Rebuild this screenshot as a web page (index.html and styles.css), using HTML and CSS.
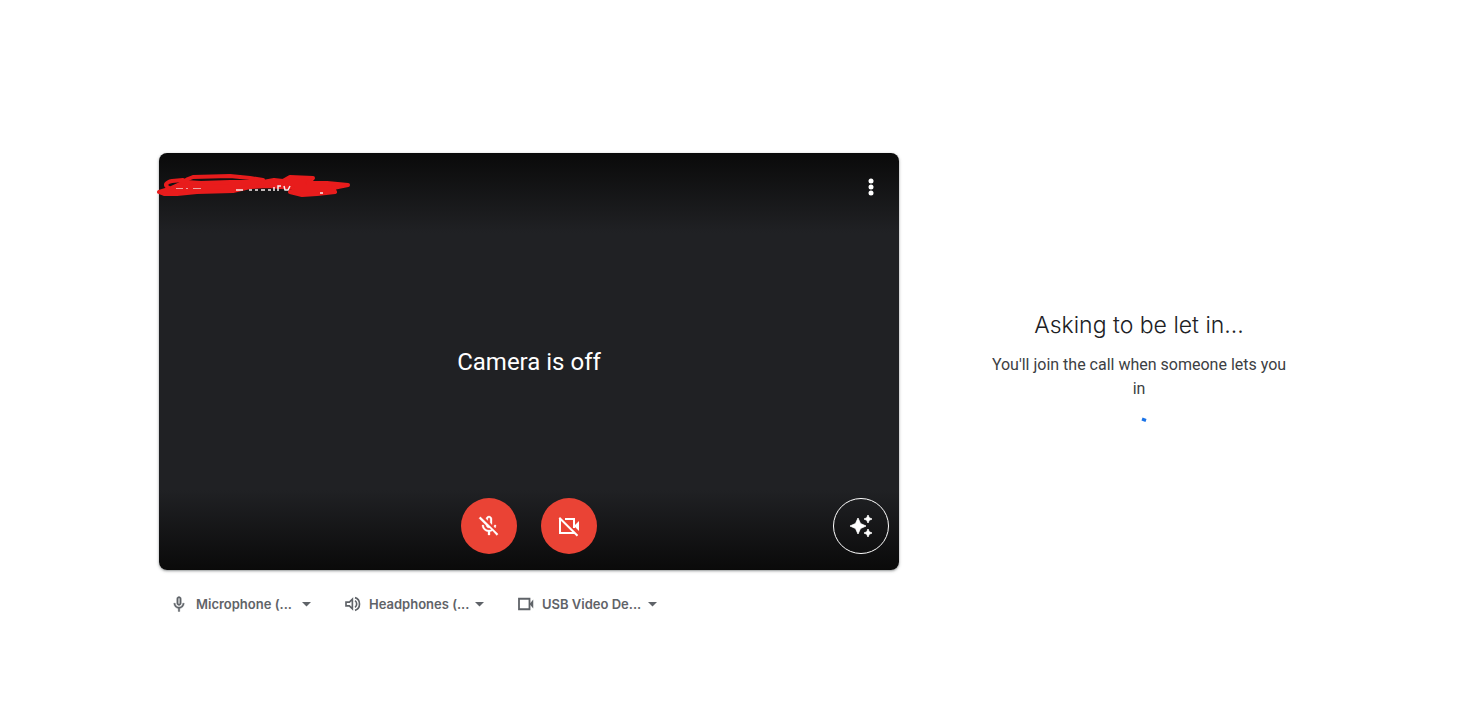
FILE: index.html
```html
<!DOCTYPE html>
<html lang="en">
<head>
<meta charset="utf-8">
<meta name="viewport" content="width=device-width, initial-scale=1">
<title>Asking to be let in</title>
<link rel="stylesheet" href="styles.css">
</head>
<body>
<main class="lobby">
  <section class="setup">
    <div class="preview">
      <header class="preview-top">
        <svg class="scribble" viewBox="0 0 196 24" aria-hidden="true">
          <g fill="#e81c1c" stroke="#e81c1c" stroke-width="4" stroke-linecap="round" stroke-linejoin="round">
            <path d="M3 18L13 15L24 10L30 8L45 9L74 8L94 8L107 8L118 6L127 7L134 3L157 4L152 9L171 9L192 11L177 14L179 18L161 20L146 21L134 18L137 14L112 12L94 13L77 17L41 18L21 20L8 20Z"/>
            <path fill="none" d="M27 8L32 5L37 3L74 2L94 4L107 6M13 14C7 11 11 8 16 7L27 6"/>
          </g>
          <g fill="none" stroke="#f6eeee" stroke-width="1.500">
            <path stroke-width="1" stroke="#eea5a5" d="M20 14.500h7M30 14.500h2M37 14.500h8"/>
            <path d="M80 16h7M93 16h3M99 16h3M105 16h4M112 16h3M118 17v-4M122 17v-5h3M128 12l1 4h3l2-4M164 19h3"/>
          </g>
        </svg>
        <button class="more" type="button" aria-label="More options">
          <svg width="24" height="24" viewBox="0 0 24 24" fill="currentColor"><circle cx="12" cy="6" r="2.5"/><circle cx="12" cy="12" r="2.5"/><circle cx="12" cy="18" r="2.5"/></svg>
        </button>
      </header>
      <p class="camera-state">Camera is off</p>
      <div class="controls">
        <div class="toggles">
          <button class="round off" type="button" aria-label="Turn on microphone">
            <svg width="24" height="24" viewBox="0 0 24 24" fill="currentColor" stroke="currentColor" stroke-width=".3"><path d="M10.800 4.900c0-.66.54-1.200 1.200-1.200s1.200.54 1.200 1.200l-.01 3.910L15 10.600V5c0-1.660-1.340-3-3-3-1.540 0-2.790 1.160-2.960 2.650l1.760 1.760V4.900zM19 11h-1.700c0 .58-.1 1.130-.27 1.640l1.270 1.270c.44-.88.7-1.870.7-2.910zM3.410 2.860L2 4.270l7 7c.2 1.600 1.500 2.730 3 2.730.23 0 .44-.03.65-.08l1.660 1.660c-.71.33-1.500.52-2.310.52-2.760 0-5.300-2.100-5.300-5.100H5c0 3.410 2.720 6.230 6 6.720V21h2v-3.280c.91-.13 1.770-.45 2.550-.9l4.200 4.600 1.410-1.410z"/></svg>
          </button>
          <button class="round off" type="button" aria-label="Turn on camera">
            <svg width="24" height="24" viewBox="0 0 24 24" fill="none" stroke="currentColor" stroke-width="2"><path d="M8 5h9v9M18 19H3V5M2.300 3.700l18.200 18"/><path fill="currentColor" stroke="none" d="M17 12l5-5v10z"/></svg>
          </button>
        </div>
        <button class="round effects" type="button" aria-label="Apply visual effects">
          <svg width="24" height="24" viewBox="0 0 24 24" fill="currentColor"><path d="M11.500 9.500L9 4 6.500 9.500 1 12l5.500 2.500L9 20l2.500-5.500L17 12zM19 9l1.250-2.750L23 5l-2.750-1.250L19 1l-1.250 2.750L15 5l2.750 1.250zM19 15l-1.250 2.750L15 19l2.750 1.250L19 23l1.250-2.750L23 19l-2.750-1.250z" stroke="currentColor" stroke-width=".8"/></svg>
        </button>
      </div>
    </div>
    <div class="devices">
      <label class="device">
        <svg width="18" height="18" viewBox="0 0 24 24" fill="currentColor"><path d="M12 14c1.660 0 3-1.340 3-3V5c0-1.660-1.340-3-3-3S9 3.340 9 5v6c0 1.660 1.340 3 3 3zM11 5c0-.55.45-1 1-1s1 .45 1 1v6c0 .55-.45 1-1 1s-1-.45-1-1V5zm6 6c0 2.760-2.240 5-5 5s-5-2.240-5-5H5c0 3.530 2.610 6.430 6 6.920V22h2v-4.080c3.390-.49 6-3.390 6-6.920h-2z" stroke="currentColor" stroke-width=".5"/></svg>
        <select aria-label="Microphone"><option>Microphone (...</option></select>
        <svg class="caret" width="10" height="5" viewBox="0 0 10 5" fill="currentColor"><path d="M0 0h9L4.500 4.500z"/></svg>
      </label>
      <label class="device">
        <svg width="18" height="18" viewBox="0 0 24 24" fill="none" stroke="currentColor" stroke-width="2.200"><path d="M4 9.500v5h4.500l4 4v-13l-4 4z"/><path d="M16 7.500c3 2 3 7 0 9M16 3.500c8 2.500 8 14.500 0 17"/></svg>
        <select aria-label="Speaker"><option>Headphones (...</option></select>
        <svg class="caret" width="10" height="5" viewBox="0 0 10 5" fill="currentColor"><path d="M0 0h9L4.500 4.500z"/></svg>
      </label>
      <label class="device">
        <svg width="18" height="18" viewBox="0 0 24 24" fill="none" stroke="currentColor" stroke-width="2.400"><path d="M4 5h14v14H4z"/><path fill="currentColor" stroke="none" d="M18 12l5-6v12z"/></svg>
        <select aria-label="Camera"><option>USB Video De...</option></select>
        <svg class="caret" width="10" height="5" viewBox="0 0 10 5" fill="currentColor"><path d="M0 0h9L4.500 4.500z"/></svg>
      </label>
    </div>
  </section>
  <section class="waiting" role="status">
    <h1>Asking to be let in...</h1>
    <p>You'll join the call when someone lets you in</p>
    <svg class="spinner" width="28" height="28" viewBox="0 0 28 28" aria-hidden="true"><path d="M17 2l4 1.500" fill="none" stroke="#1a73e8" stroke-width="3"/></svg>
  </section>
</main>
</body>
</html>
```
FILE: styles.css
```css
* {
  box-sizing: border-box;
}

body {
  margin: 0;
  background: #fff;
  color: #202124;
  font-family: Roboto, "Liberation Sans", sans-serif;
}

button {
  display: grid;
  place-items: center;
  padding: 0;
  border: 0;
  background: none;
  color: #fff;
  cursor: pointer;
}

.lobby {
  display: grid;
  grid-template-columns: 740fr 356fr;
  gap: 62px;
  max-width: 1158px;
  margin: 0 auto;
  padding-top: 153px;
}

.preview {
  position: relative;
  display: flex;
  flex-direction: column;
  justify-content: space-between;
  aspect-ratio: 740 / 417;
  border-radius: 8px;
  background: linear-gradient(#0a0a0a, #202124 80px, #202124 calc(100% - 80px), #0a0a0a);
  box-shadow: 0 1px 2px rgba(60, 64, 67, 0.4), 0 1px 3px 1px rgba(60, 64, 67, 0.15);
}

.preview-top {
  display: flex;
  justify-content: flex-end;
  height: 72px;
  padding: 10px 4px 0 0;
}

.scribble {
  position: absolute;
  top: 21px;
  left: -3px;
  width: 196px;
  height: 24px;
}

.more {
  width: 48px;
  height: 48px;
}

.camera-state {
  margin: 0;
  color: #fff;
  font-size: 24px;
  line-height: 32px;
  text-align: center;
}

.controls {
  display: grid;
  grid-template-columns: 1fr auto 1fr;
  padding: 0 10px 16px;
}

.toggles {
  display: flex;
  grid-column: 2;
  gap: 24px;
}

.round {
  width: 56px;
  height: 56px;
  border-radius: 50%;
}

.off {
  background: #ea4335;
}

.effects {
  justify-self: end;
  border: 1px solid #fff;
}

.devices {
  display: flex;
  gap: 32px;
  padding: 22px 0 0 11px;
}

.device {
  display: grid;
  grid-template-columns: 18px 106px 17px;
  align-items: center;
  color: #5f6368;
}

.device select {
  grid-row: 1;
  grid-column: 2 / 4;
  height: 24px;
  margin: 0;
  padding: 0 0 0 8px;
  border: 0;
  background: none;
  color: inherit;
  font: 600 13px/24px Inter, sans-serif;
  appearance: none;
}

.caret {
  grid-row: 1;
  grid-column: 3;
  margin-left: 8px;
  pointer-events: none;
}

.waiting {
  padding: 156px 28px 0;
  text-align: center;
}

.waiting h1 {
  margin: 0;
  font: 300 23px/32px Inter, sans-serif;
}

.waiting p {
  margin: 12px 0 16px;
  color: #3c4043;
  font-size: 16px;
  line-height: 24px;
}

.spinner {
  display: block;
  margin: 0 auto;
}
```
